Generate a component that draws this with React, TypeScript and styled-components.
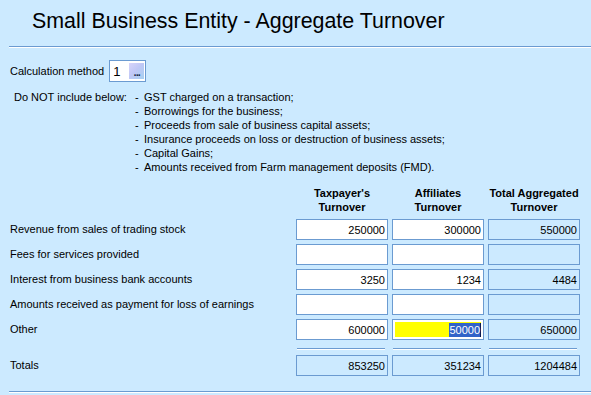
import React from "react";
import styled, { createGlobalStyle } from "styled-components";

const GlobalStyle = createGlobalStyle`
  html, body {
    margin: 0;
    padding: 0;
    background: #cceaff;
  }
  body {
    font-family: "Liberation Sans", Arial, sans-serif;
    font-size: 11px;
    color: #000;
  }
`;

const Page = styled.div`
  width: 591px;
  height: 395px;
  background: #cceaff;
  overflow: hidden;
  display: flex;
  flex-direction: column;
`;

const Title = styled.h1`
  margin: 0;
  padding: 8px 0 0 32px;
  height: 31px;
  font-size: 21.4px;
  font-weight: normal;
  line-height: 26px;
`;

const Rule = styled.div<{ $top?: number }>`
  margin-left: 9px;
  margin-top: ${(p) => p.$top ?? 0}px;
  height: 1px;
  background: #6b9bd1;
  border-bottom: 1px solid #ffffff;
`;

const Body = styled.div`
  padding: 12px 11px 0 10px;
  display: flex;
  flex-direction: column;
`;

const MethodRow = styled.div`
  display: flex;
  align-items: center;
  gap: 5px;
  height: 22px;
`;

const MethodBox = styled.div`
  width: 31px;
  height: 20px;
  background: #fff;
  border: 1px solid #6b9bd1;
  display: flex;
  align-items: center;
  justify-content: space-between;
  padding: 0 1px 0 3px;
  box-sizing: content-box;
  font-size: 13px;
`;

const DotsButton = styled.div`
  width: 15px;
  height: 16px;
  box-sizing: border-box;
  padding-bottom: 3px;
  background: linear-gradient(135deg, #d8d4fa 0%, #c0c8f6 45%, #a6d0f0 100%);
  display: flex;
  align-items: flex-end;
  justify-content: center;
  font-family: "DejaVu Sans", sans-serif;
  font-size: 8px;
  font-weight: bold;
  line-height: 5px;
  letter-spacing: -1px;
  color: #102040;
`;

const Exclusions = styled.div`
  display: flex;
  padding: 8px 0 0 4px;
`;

const ExclusionsLabel = styled.div`
  width: 121px;
  line-height: 14px;
`;

const ExclusionList = styled.ul`
  list-style: none;
  margin: 0;
  padding: 0;
`;

const ExclusionItem = styled.li`
  line-height: 14px;
  display: flex;
  &::before {
    content: "-";
    width: 9px;
  }
`;

const Grid = styled.div`
  margin-top: 12px;
  display: grid;
  grid-template-columns: 1fr 92px 92px 92px;
  column-gap: 4px;
  row-gap: 4px;
  align-items: center;
`;

const HeadCell = styled.div`
  font-weight: bold;
  text-align: center;
  line-height: 14px;
  white-space: nowrap;
  padding-bottom: 1px;
`;

const Label = styled.div`
  line-height: 21px;
`;

const Field = styled.div<{ $computed?: boolean }>`
  height: 21px;
  box-sizing: border-box;
  border: 1px solid #6b9bd1;
  background: ${(p) => (p.$computed ? "#cceaff" : "#ffffff")};
  display: flex;
  align-items: center;
  justify-content: flex-end;
  padding-right: 2px;
  font-size: 11px;
`;

const Highlight = styled.div`
  flex: 1;
  margin: 2px 0 2px 2px;
  align-self: stretch;
  background: #ffff00;
  display: flex;
  align-items: center;
  justify-content: flex-end;
`;

const Selected = styled.span`
  background: #3163c8;
  color: #fff;
  line-height: 14px;
  border-right: 1px solid #0a1a50;
`;

const TotalRule = styled.div`
  height: 1px;
  margin: 4px 3px 1px 1px;
  background: #6b9bd1;
  border-bottom: 1px solid #ffffff;
`;

type Row = {
  label: string;
  tax: string;
  aff: string;
  total: string;
  selected?: boolean;
};

const rows: Row[] = [
  { label: "Revenue from sales of trading stock", tax: "250000", aff: "300000", total: "550000" },
  { label: "Fees for services provided", tax: "", aff: "", total: "" },
  { label: "Interest from business bank accounts", tax: "3250", aff: "1234", total: "4484" },
  { label: "Amounts received as payment for loss of earnings", tax: "", aff: "", total: "" },
  { label: "Other", tax: "600000", aff: "50000", total: "650000", selected: true },
];

const exclusions = [
  "GST charged on a transaction;",
  "Borrowings for the business;",
  "Proceeds from sale of business capital assets;",
  "Insurance proceeds on loss or destruction of business assets;",
  "Capital Gains;",
  "Amounts received from Farm management deposits (FMD).",
];

export default function App() {
  return (
    <>
      <GlobalStyle />
      <Page>
        <Title>Small Business Entity - Aggregate Turnover</Title>
        <Rule $top={7} />
        <Body>
          <MethodRow>
            <span>Calculation method</span>
            <MethodBox>
              <span>1</span>
              <DotsButton>...</DotsButton>
            </MethodBox>
          </MethodRow>
          <Exclusions>
            <ExclusionsLabel>Do NOT include below:</ExclusionsLabel>
            <ExclusionList>
              {exclusions.map((e) => (
                <ExclusionItem key={e}>{e}</ExclusionItem>
              ))}
            </ExclusionList>
          </Exclusions>
          <Grid>
            <div />
            <HeadCell>
              Taxpayer's
              <br />
              Turnover
            </HeadCell>
            <HeadCell>
              Affiliates
              <br />
              Turnover
            </HeadCell>
            <HeadCell>
              Total Aggregated
              <br />
              Turnover
            </HeadCell>
            {rows.map((r) => (
              <React.Fragment key={r.label}>
                <Label>{r.label}</Label>
                <Field>{r.tax}</Field>
                {r.selected ? (
                  <Field>
                    <Highlight>
                      <Selected>{r.aff}</Selected>
                    </Highlight>
                  </Field>
                ) : (
                  <Field>{r.aff}</Field>
                )}
                <Field $computed>{r.total}</Field>
              </React.Fragment>
            ))}
            <div />
            <TotalRule />
            <TotalRule />
            <TotalRule />
            <Label>Totals</Label>
            <Field $computed>853250</Field>
            <Field $computed>351234</Field>
            <Field $computed>1204484</Field>
          </Grid>
        </Body>
        <Rule $top={15} />
      </Page>
    </>
  );
}
